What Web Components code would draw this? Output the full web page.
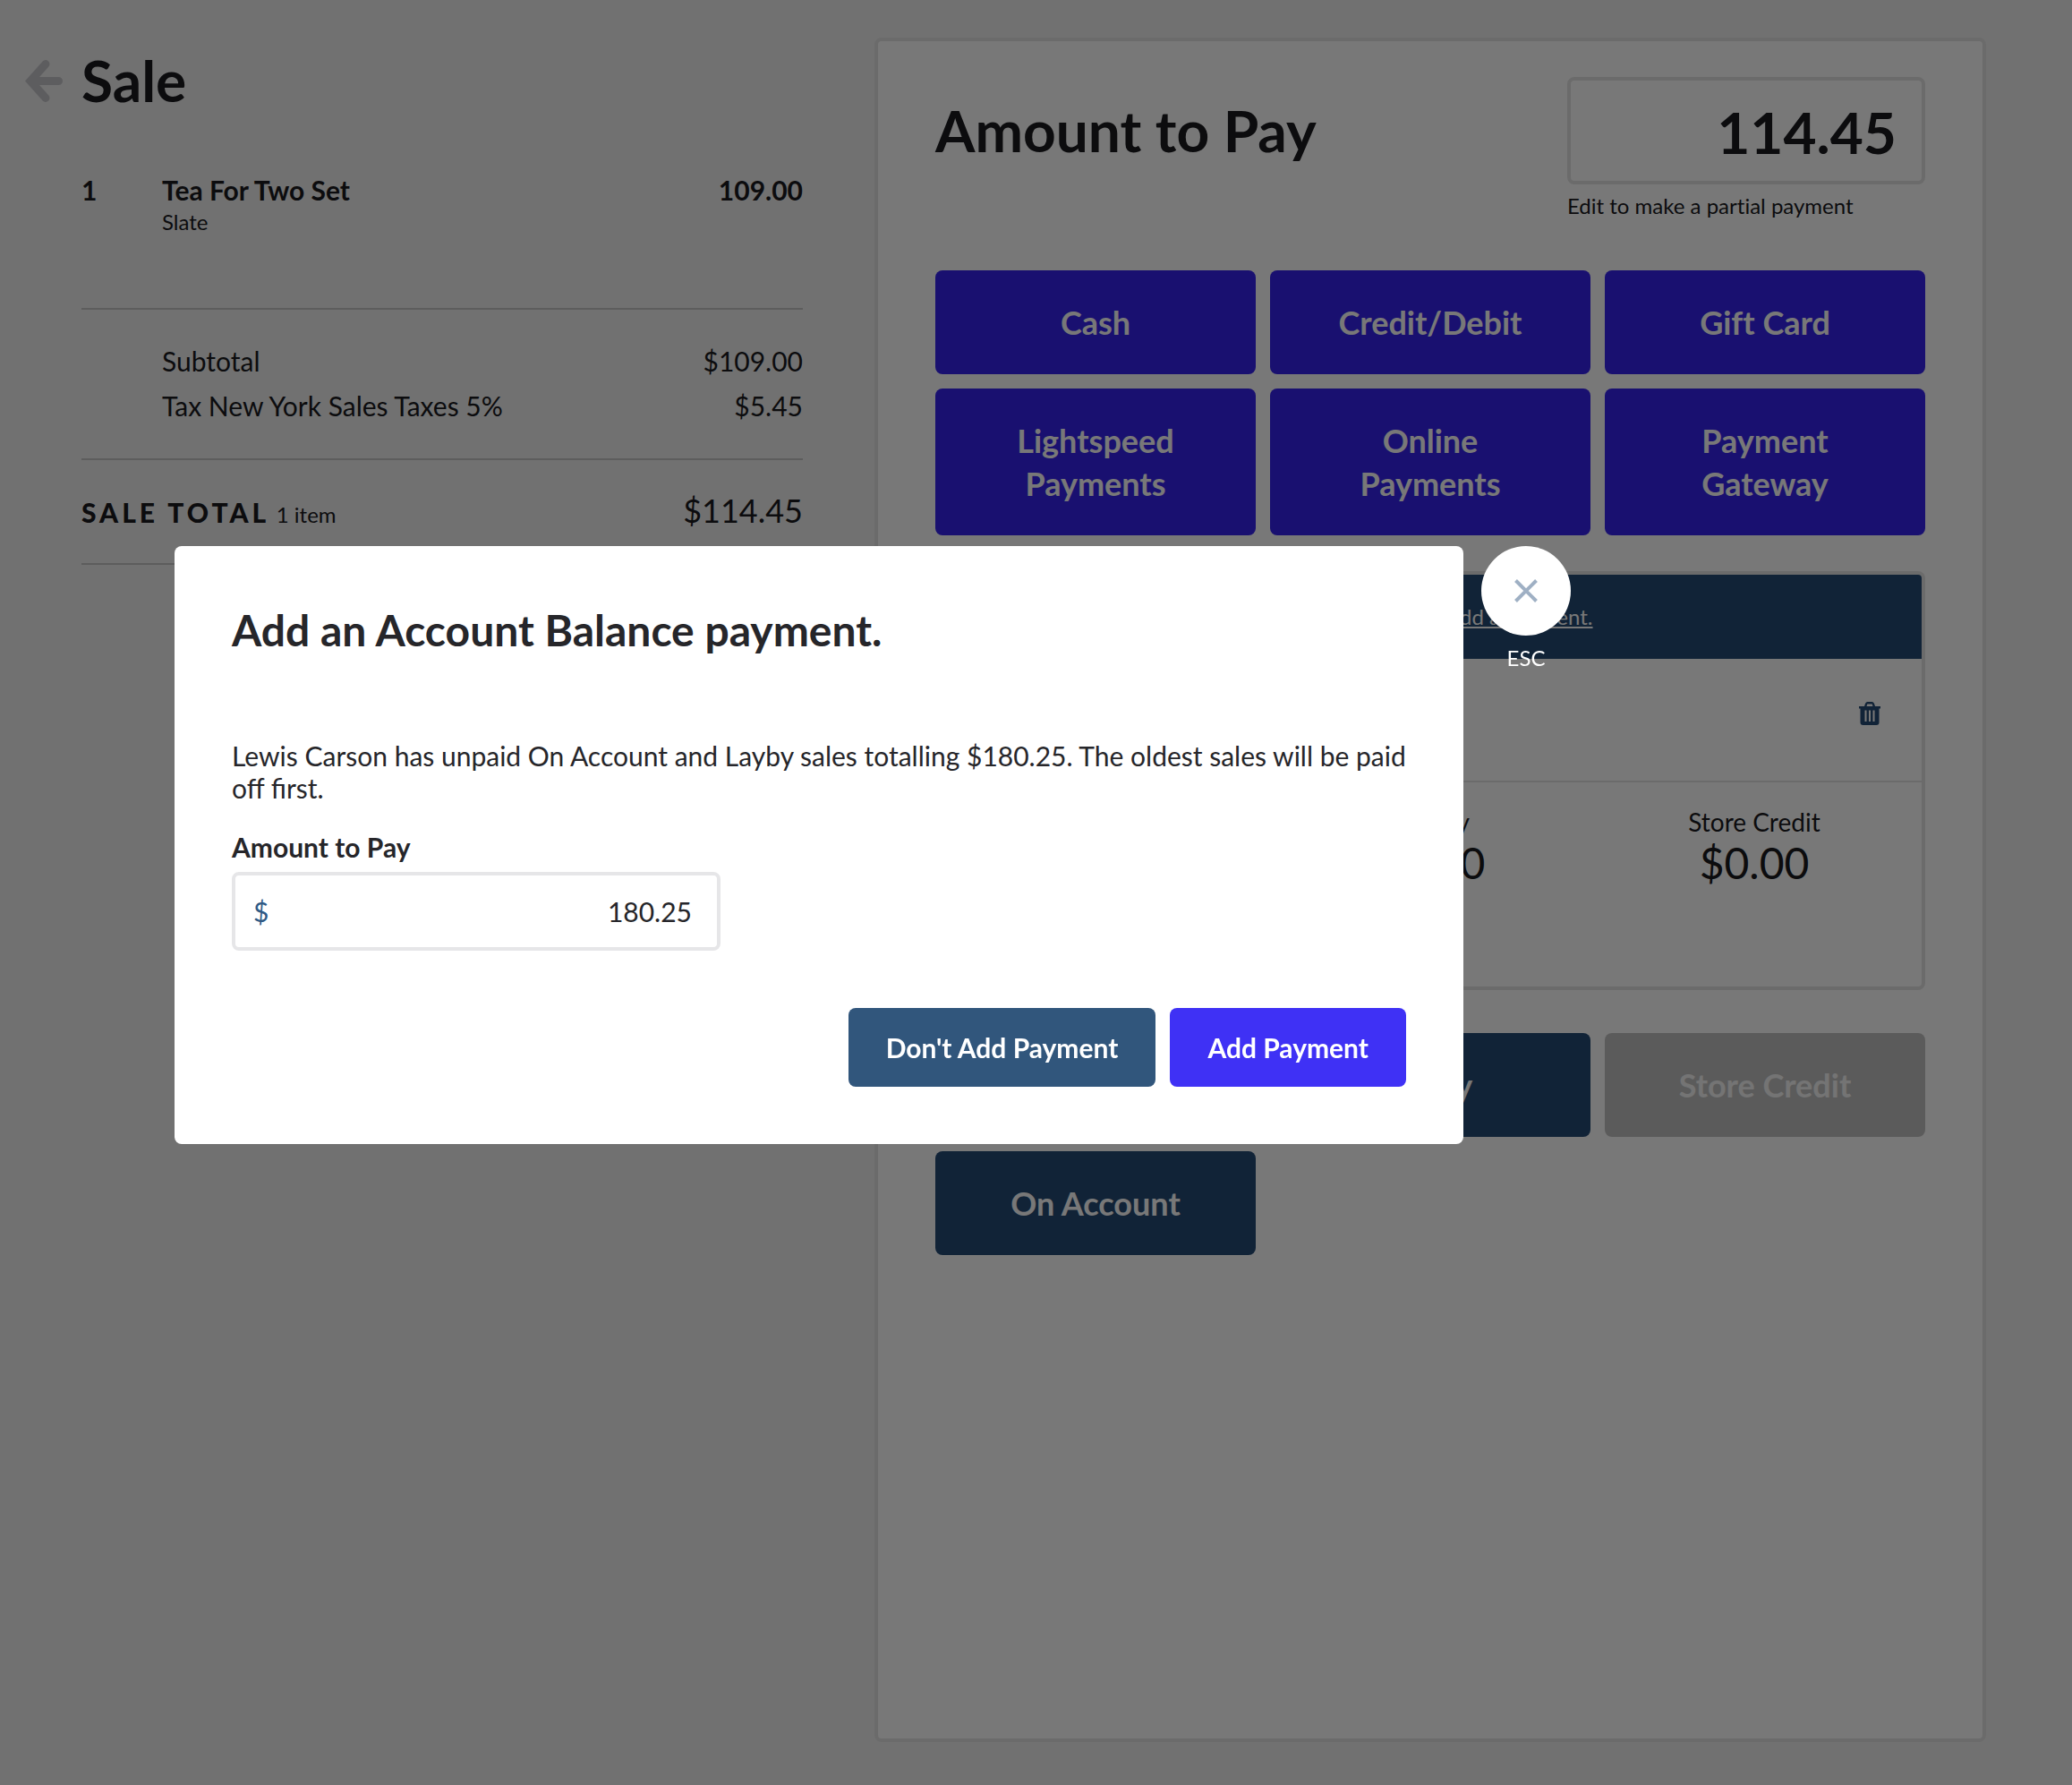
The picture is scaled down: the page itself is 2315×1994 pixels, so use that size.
<!DOCTYPE html>
<html lang="en">
<head>
<meta charset="utf-8">
<title>Sale</title>
<style>
  body {
    margin: 0;
    font-family: Lato, "Liberation Sans", sans-serif;
    font-size: 30px;
    line-height: 36px;
    color: #1a1a1e;
    background: #f0f0f0;
    --line: #c6c6c6;
    --edge: #e3e3e3;
    --blue: #3522ee;
    --navy: #264c76;
  }
</style>
</head>
<body>
<pos-page>
  <sale-summary slot="sale">
    <sale-line qty="1" price="109.00">Tea For Two Set<span slot="variant">Slate</span></sale-line>
  </sale-summary>
  <pay-panel slot="pay"></pay-panel>
</pos-page>
<pay-dialog heading="Add an Account Balance payment.">
  Lewis Carson has unpaid On Account and Layby sales totalling $180.25. The oldest sales will be paid off first.
</pay-dialog>

<script>
const define = (name, html, setup) => customElements.define(name, class extends HTMLElement {
  constructor() {
    super();
    this.attachShadow({ mode: 'open' }).innerHTML = `<style>*{box-sizing:border-box}h1,h2,p,dl,dd,dt{margin:0}h1,h2{font-weight:700}button,input{font:inherit;color:inherit;margin:0}</style>` + html;
  }
  connectedCallback() { if (setup) setup(this, this.shadowRoot); }
});

define('pos-page', `
<style>
  :host { display: grid; grid-template-columns: 403fr 621fr; gap: 80px; min-height: 100vh; box-sizing: border-box; padding: 42px 96px 48px 91px; }
</style>
<slot name="sale"></slot>
<slot name="pay"></slot>`);

define('sale-line', `
<style>
  :host { display: grid; grid-template-columns: 90px 1fr auto; font-weight: 700; }
  ::slotted([slot=variant]) { display: block; font-size: 24px; font-weight: 400; }
</style>
<span class="qty"></span>
<div><slot></slot><slot name="variant"></slot></div>
<span class="price"></span>`, (el, root) => {
  root.querySelector('.qty').textContent = el.getAttribute('qty');
  root.querySelector('.price').textContent = el.getAttribute('price');
});

define('sale-summary', `
<style>
  :host { display: block; }
  header { display: flex; align-items: center; height: 96px; margin: 0 0 56px -63px; }
  .back { display: flex; width: 63px; padding: 0; border: 0; background: none; }
  h1 { font-size: 64px; line-height: 96px; }
  .lines { padding-bottom: 78px; }
  .totals, .grand { border-top: 2px solid var(--line); }
  .totals { padding: 32px 0 34px 90px; line-height: 50px; }
  .totals div, .grand { display: flex; justify-content: space-between; align-items: baseline; }
  .grand { padding: 30px 0 28px; line-height: 52px; border-bottom: 2px solid var(--line); }
  .grand b { font-weight: 900; letter-spacing: 4px; }
  .grand small { font-size: 24px; }
  .grand dd { font-size: 36px; }
</style>
<header>
  <button class="back" aria-label="Back"><svg width="42" height="47" viewBox="0 0 42 47" fill="none" stroke="#c6c6cb" stroke-width="9" stroke-linecap="round"><path d="M23 4.5 6 23.5l17 19M8 23.5h29.500"/></svg></button>
  <h1>Sale</h1>
</header>
<div class="lines"><slot></slot></div>
<dl class="totals">
  <div><dt>Subtotal</dt><dd>$109.00</dd></div>
  <div><dt>Tax New York Sales Taxes 5%</dt><dd>$5.45</dd></div>
</dl>
<dl class="grand"><dt><b>SALE TOTAL</b> <small>1 item</small></dt><dd>$114.45</dd></dl>`);

define('pay-button', `
<style>
  :host { display: flex; }
  button { flex: 1; padding: 34px 72px; border: 0; border-radius: 8px; background: var(--blue); color: #fff; font-size: 36px; line-height: 48px; font-weight: 700; font-variant-ligatures: none; }
  :host([kind=account]) button { background: var(--navy); }
  :host([disabled]) button { background: #c2c2c2; color: #f6f6f6; }
</style>
<button><slot></slot></button>`, (el, root) => {
  root.querySelector('button').disabled = el.hasAttribute('disabled');
});

define('customer-card', `
<style>
  :host { display: block; border: 4px solid var(--edge); border-radius: 8px; overflow: hidden; }
  .notice { background: var(--navy); color: #fff; font-size: 24px; line-height: 94px; text-align: center; }
  a { color: inherit; text-decoration: underline; }
  .who { display: flex; justify-content: space-between; align-items: flex-start; padding: 48px 46px 52px; border-bottom: 2px solid var(--edge); }
  .who button { display: flex; padding: 0; border: 0; background: none; }
  dl { display: grid; grid-template-columns: repeat(3, 1fr); padding: 26px 6px 110px; text-align: center; }
  dt { font-size: 28px; }
  dd { font-size: 48px; line-height: 56px; }
</style>
<div class="notice"><a href="#pay">Outstanding sales. Add a payment.</a></div>
<div class="who"><span>Lewis Carson</span>
  <button aria-label="Remove customer"><svg width="24" height="26" viewBox="0 0 24 26" fill="#264c76"><path fill-rule="evenodd" d="M0 5h6l1-3q.8-2 2.500-2h5q1.700 0 2.500 2l1 3h6v2.500h-1.500V23q0 3-3 3h-15q-3 0-3-3V7.500H0zM8.500 5h7l-.8-2.500H9.300zM6.500 9.500v12.500h2V9.500zM11 9.500v12.500h2V9.500zM15.500 9.500v12.500h2V9.500z"/></svg></button>
</div>
<dl>
  <div><dt>Balance</dt><dd>$180.25</dd></div>
  <div><dt>Loyalty</dt><dd>$0.00</dd></div>
  <div><dt>Store Credit</dt><dd>$0.00</dd></div>
</dl>`);

define('pay-panel', `
<style>
  :host { display: block; box-sizing: border-box; border: 4px solid var(--edge); border-radius: 8px; background: #fff; padding: 40px 64px; }
  header { display: flex; justify-content: space-between; margin-bottom: 54px; }
  h2, input { font-size: 64px; font-weight: 700; }
  h2 { line-height: 120px; }
  .amount { width: 400px; }
  input { display: block; width: 100%; height: 120px; padding: 2px 28px 0; border: 4px solid var(--edge); border-radius: 8px; background: none; text-align: right; }
  .amount label { display: block; margin-top: 6px; font-size: 24px; line-height: 36px; font-variant-ligatures: none; }
  .grid { display: grid; grid-template-columns: repeat(3, 1fr); gap: 16px; }
  customer-card { margin: 40px 0 48px; }
</style>
<header>
  <h2>Amount to Pay</h2>
  <div class="amount"><input id="amt" value="114.45"><label for="amt">Edit to make a partial payment</label></div>
</header>
<div class="grid">
  <pay-button>Cash</pay-button><pay-button>Credit/Debit</pay-button><pay-button>Gift Card</pay-button>
  <pay-button>Lightspeed Payments</pay-button><pay-button>Online Payments</pay-button><pay-button>Payment Gateway</pay-button>
</div>
<customer-card></customer-card>
<div class="grid">
  <pay-button kind="account">Loyalty</pay-button><pay-button kind="account">Layby</pay-button><pay-button kind="account" disabled>Store Credit</pay-button>
  <pay-button kind="account">On Account</pay-button>
</div>`);

define('pay-dialog', `
<style>
  :host { position: fixed; inset: 0; display: flex; align-items: flex-start; gap: 20px; box-sizing: border-box; padding: 610px 195px 0; background: rgba(0, 0, 0, .53); }
  section { width: 1440px; box-sizing: border-box; padding: 64px; border-radius: 8px; background: #fff; color: #26262a; }
  h2 { margin-bottom: 92px; font-size: 48px; line-height: 60px; }
  label { display: block; margin: 30px 0 10px; font-weight: 700; }
  .field { display: flex; align-items: center; width: 546px; height: 88px; padding: 0 28px 0 20px; border: 4px solid #e6e6e8; border-radius: 8px; }
  .field span { color: #2f5a85; }
  .field input { flex: 1; min-width: 0; padding: 0; border: 0; background: none; text-align: right; outline: 0; }
  footer { display: flex; justify-content: flex-end; gap: 16px; margin-top: 64px; }
  footer button { height: 88px; padding: 0 42px; border: 0; border-radius: 8px; color: #fff; font-weight: 700; background: #31567c; }
  footer .primary { background: #3f31f5; }
  .close { display: flex; flex-direction: column; gap: 8px; padding: 0; border: 0; background: none; color: #fff; font-size: 24px; line-height: 34px; }
  .close i { display: grid; place-items: center; width: 100px; height: 100px; border-radius: 50%; background: #fff; }
  .close span { text-align: center; }
</style>
<section role="dialog" aria-labelledby="t">
  <h2 id="t"></h2>
  <p><slot></slot></p>
  <label for="pay">Amount to Pay</label>
  <div class="field"><span>$</span><input id="pay" value="180.25"></div>
  <footer><button>Don't Add Payment</button><button class="primary">Add Payment</button></footer>
</section>
<button class="close" aria-label="Close"><i><svg width="26" height="26" viewBox="0 0 26 26" stroke="#9fb0c4" stroke-width="4"><path d="M1.500 1.500l23 23M24.500 1.500l-23 23"/></svg></i><span>ESC</span></button>`, (el, root) => {
  root.querySelector('h2').textContent = el.getAttribute('heading');
});
</script>
</body>
</html>
